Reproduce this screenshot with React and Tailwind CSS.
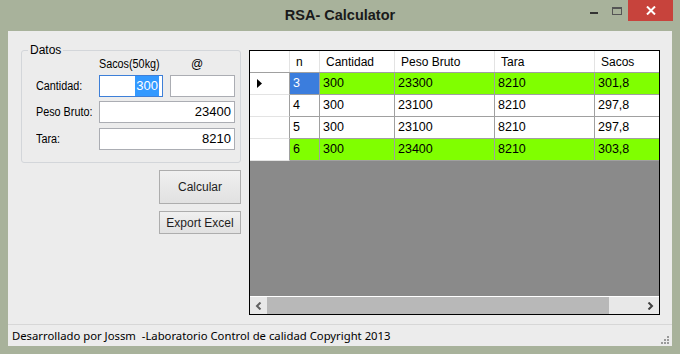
import React from 'react';

const rows = [
  { n: '3', cant: '300', peso: '23300', tara: '8210', sacos: '301,8', green: true, current: true },
  { n: '4', cant: '300', peso: '23100', tara: '8210', sacos: '297,8', green: false },
  { n: '5', cant: '300', peso: '23100', tara: '8210', sacos: '297,8', green: false },
  { n: '6', cant: '300', peso: '23400', tara: '8210', sacos: '303,8', green: true },
];

const cols = [
  { key: 'n', label: 'n', w: 'w-[30px]' },
  { key: 'cant', label: 'Cantidad', w: 'w-[75px]' },
  { key: 'peso', label: 'Peso Bruto', w: 'w-[100px]' },
  { key: 'tara', label: 'Tara', w: 'w-[100px]' },
  { key: 'sacos', label: 'Sacos', w: 'w-[64px]' },
];

const TitleBar = () => (
  <div className="grid h-[31px] grid-cols-[1fr_auto_1fr]">
    <div />
    <div className="pt-[5px] text-[14.5px] font-bold leading-[20px] text-[#1a1a1a]">RSA- Calculator</div>
    <div className="flex items-start justify-end pr-[7px]">
      <div className="flex h-[21px] w-[28px] items-center justify-center">
        <div className="mt-[5px] h-[2px] w-[8px] bg-[#333]" />
      </div>
      <div className="flex h-[21px] w-[17px] items-center justify-center">
        <div className="h-[8px] w-[10px] border border-[#555] border-t-2" />
      </div>
      <div className="ml-[3px] flex h-[21px] w-[45px] items-center justify-center bg-[#c7433c]">
        <svg width="10" height="9" viewBox="0 0 10 9">
          <path d="M1 0.5 L9 8.5 M9 0.5 L1 8.5" stroke="#fff" strokeWidth="2" />
        </svg>
      </div>
    </div>
  </div>
);

const Label = ({ children }) => (
  <div className="w-[63px]">
    <div className="origin-left scale-x-90 whitespace-nowrap">{children}</div>
  </div>
);

const Input = ({ value, w, focused }) => (
  <div
    className={`flex h-[22px] ${w} items-center justify-end border bg-white pr-[3px] text-[13px] ${
      focused ? 'border-[#3d7fd8]' : 'border-[#abadb3]'
    }`}
  >
    {focused ? (
      <span className="bg-[#3399ff] px-[1px] text-white">{value}</span>
    ) : (
      <span>{value}</span>
    )}
  </div>
);

const Datos = () => (
  <fieldset className="w-[220px] rounded-[3px] border border-[#d3d6da]">
    <legend className="ml-[6px] px-[2px] leading-[14px]">Datos</legend>
    <div className="pb-[12px] pl-[14px] pr-[5px] text-[12px]">
      <div className="flex h-[14px] leading-[14px]">
        <div className="w-[63px]" />
        <div className="w-[64px]">
          <div className="origin-left scale-x-90 whitespace-nowrap">Sacos(50kg)</div>
        </div>
        <div className="w-[7px]" />
        <div className="w-[65px] pl-[21px]">@</div>
      </div>
      <div className="mt-[4px] flex items-center">
        <Label>Cantidad:</Label>
        <Input value="300" w="w-[64px]" focused />
        <div className="w-[7px]" />
        <Input value="" w="w-[65px]" />
      </div>
      <div className="mt-[4px] flex items-center">
        <Label>Peso Bruto:</Label>
        <Input value="23400" w="w-[136px]" />
      </div>
      <div className="mt-[5px] flex items-center">
        <Label>Tara:</Label>
        <Input value="8210" w="w-[136px]" />
      </div>
    </div>
  </fieldset>
);

const Button = ({ children, h }) => (
  <div
    className={`flex ${h} w-[82px] items-center justify-center border border-[#adadad] bg-gradient-to-b from-[#f0f0f0] to-[#e1e1e1] text-[#1e1e1e]`}
  >
    {children}
  </div>
);

const Grid = () => (
  <div className="mt-[19px] flex h-[265px] w-[411px] flex-col border border-black bg-[#8a8a8a] text-[12.5px]">
    <div className="flex h-[22px] border-b border-[#a0a0a0] bg-white text-[12px]">
      <div className="w-[40px] border-r border-[#e3e3e3]" />
      {cols.map((c, i) => (
        <div
          key={c.key}
          className={`${c.w} flex items-center pl-[6px] ${i < cols.length - 1 ? 'border-r border-[#e3e3e3]' : ''}`}
        >
          {c.label}
        </div>
      ))}
    </div>
    {rows.map((r) => (
      <div key={r.n} className="flex h-[22px]">
        <div className="flex w-[40px] items-center border-b border-r border-[#e3e3e3] border-r-[#a0a0a0] bg-white pl-[7px]">
          {r.current && (
            <svg width="5" height="9" viewBox="0 0 5 9">
              <path d="M0 0 L5 4.5 L0 9 Z" fill="#000" />
            </svg>
          )}
        </div>
        {cols.map((c, i) => {
          const sel = r.current && c.key === 'n';
          const bg = sel ? 'bg-[#3b7ddd] text-white' : r.green ? 'bg-[#80ff00]' : 'bg-white';
          return (
            <div
              key={c.key}
              className={`${c.w} flex items-center border-b border-[#a0a0a0] pl-[3px] ${bg} ${
                i < cols.length - 1 ? 'border-r' : ''
              }`}
            >
              {r[c.key]}
            </div>
          );
        })}
      </div>
    ))}
    <div className="flex-1" />
    <div className="flex h-[18px] border-t border-white bg-[#e8e8e8]">
      <div className="flex w-[17px] items-center justify-center">
        <svg width="7" height="8" viewBox="0 0 7 8">
          <path d="M5.5 0.5 L2 4 L5.5 7.5" stroke="#606060" strokeWidth="2" fill="none" />
        </svg>
      </div>
      <div className="w-[342px] bg-[#b8b8b8]" />
      <div className="flex-1" />
      <div className="flex w-[17px] items-center justify-center">
        <svg width="7" height="8" viewBox="0 0 7 8">
          <path d="M1.5 0.5 L5 4 L1.5 7.5" stroke="#404040" strokeWidth="2" fill="none" />
        </svg>
      </div>
    </div>
  </div>
);

export default function App() {
  return (
    <div
      className="flex h-[354px] w-[680px] flex-col bg-[#a8b29b] text-[12px] text-black"
      style={{ fontFamily: '"Liberation Sans", Arial, sans-serif' }}
    >
      <TitleBar />
      <div className="mx-[8px] mb-[8px] flex flex-1 flex-col bg-[#ececec]">
        <div className="flex h-[293px] items-start gap-[8px] pl-[13px]">
          <div className="flex flex-col items-end pt-[12px]">
            <Datos />
            <div className="mt-[7px]">
              <Button h="h-[34px]">Calcular</Button>
            </div>
            <div className="mt-[7px]">
              <Button h="h-[23px]">Export Excel</Button>
            </div>
          </div>
          <Grid />
        </div>
        <div className="flex flex-1 items-center border-t border-[#d7d7d7] pl-[4px]">
          <span className="pt-[2px] text-[11.3px]" style={{ fontFamily: '"Noto Sans", "Open Sans", sans-serif' }}>
            Desarrollado por Jossm&nbsp;&nbsp;-Laboratorio Control de calidad Copyright 2013
          </span>
          <div className="ml-auto mr-[3px] mt-[8px] grid grid-cols-3 gap-[1px]">
            <div />
            <div />
            <div className="h-[2px] w-[2px] bg-[#9a9a9a]" />
            <div />
            <div className="h-[2px] w-[2px] bg-[#9a9a9a]" />
            <div className="h-[2px] w-[2px] bg-[#9a9a9a]" />
            <div className="h-[2px] w-[2px] bg-[#9a9a9a]" />
            <div className="h-[2px] w-[2px] bg-[#9a9a9a]" />
            <div className="h-[2px] w-[2px] bg-[#9a9a9a]" />
          </div>
        </div>
      </div>
    </div>
  );
}
